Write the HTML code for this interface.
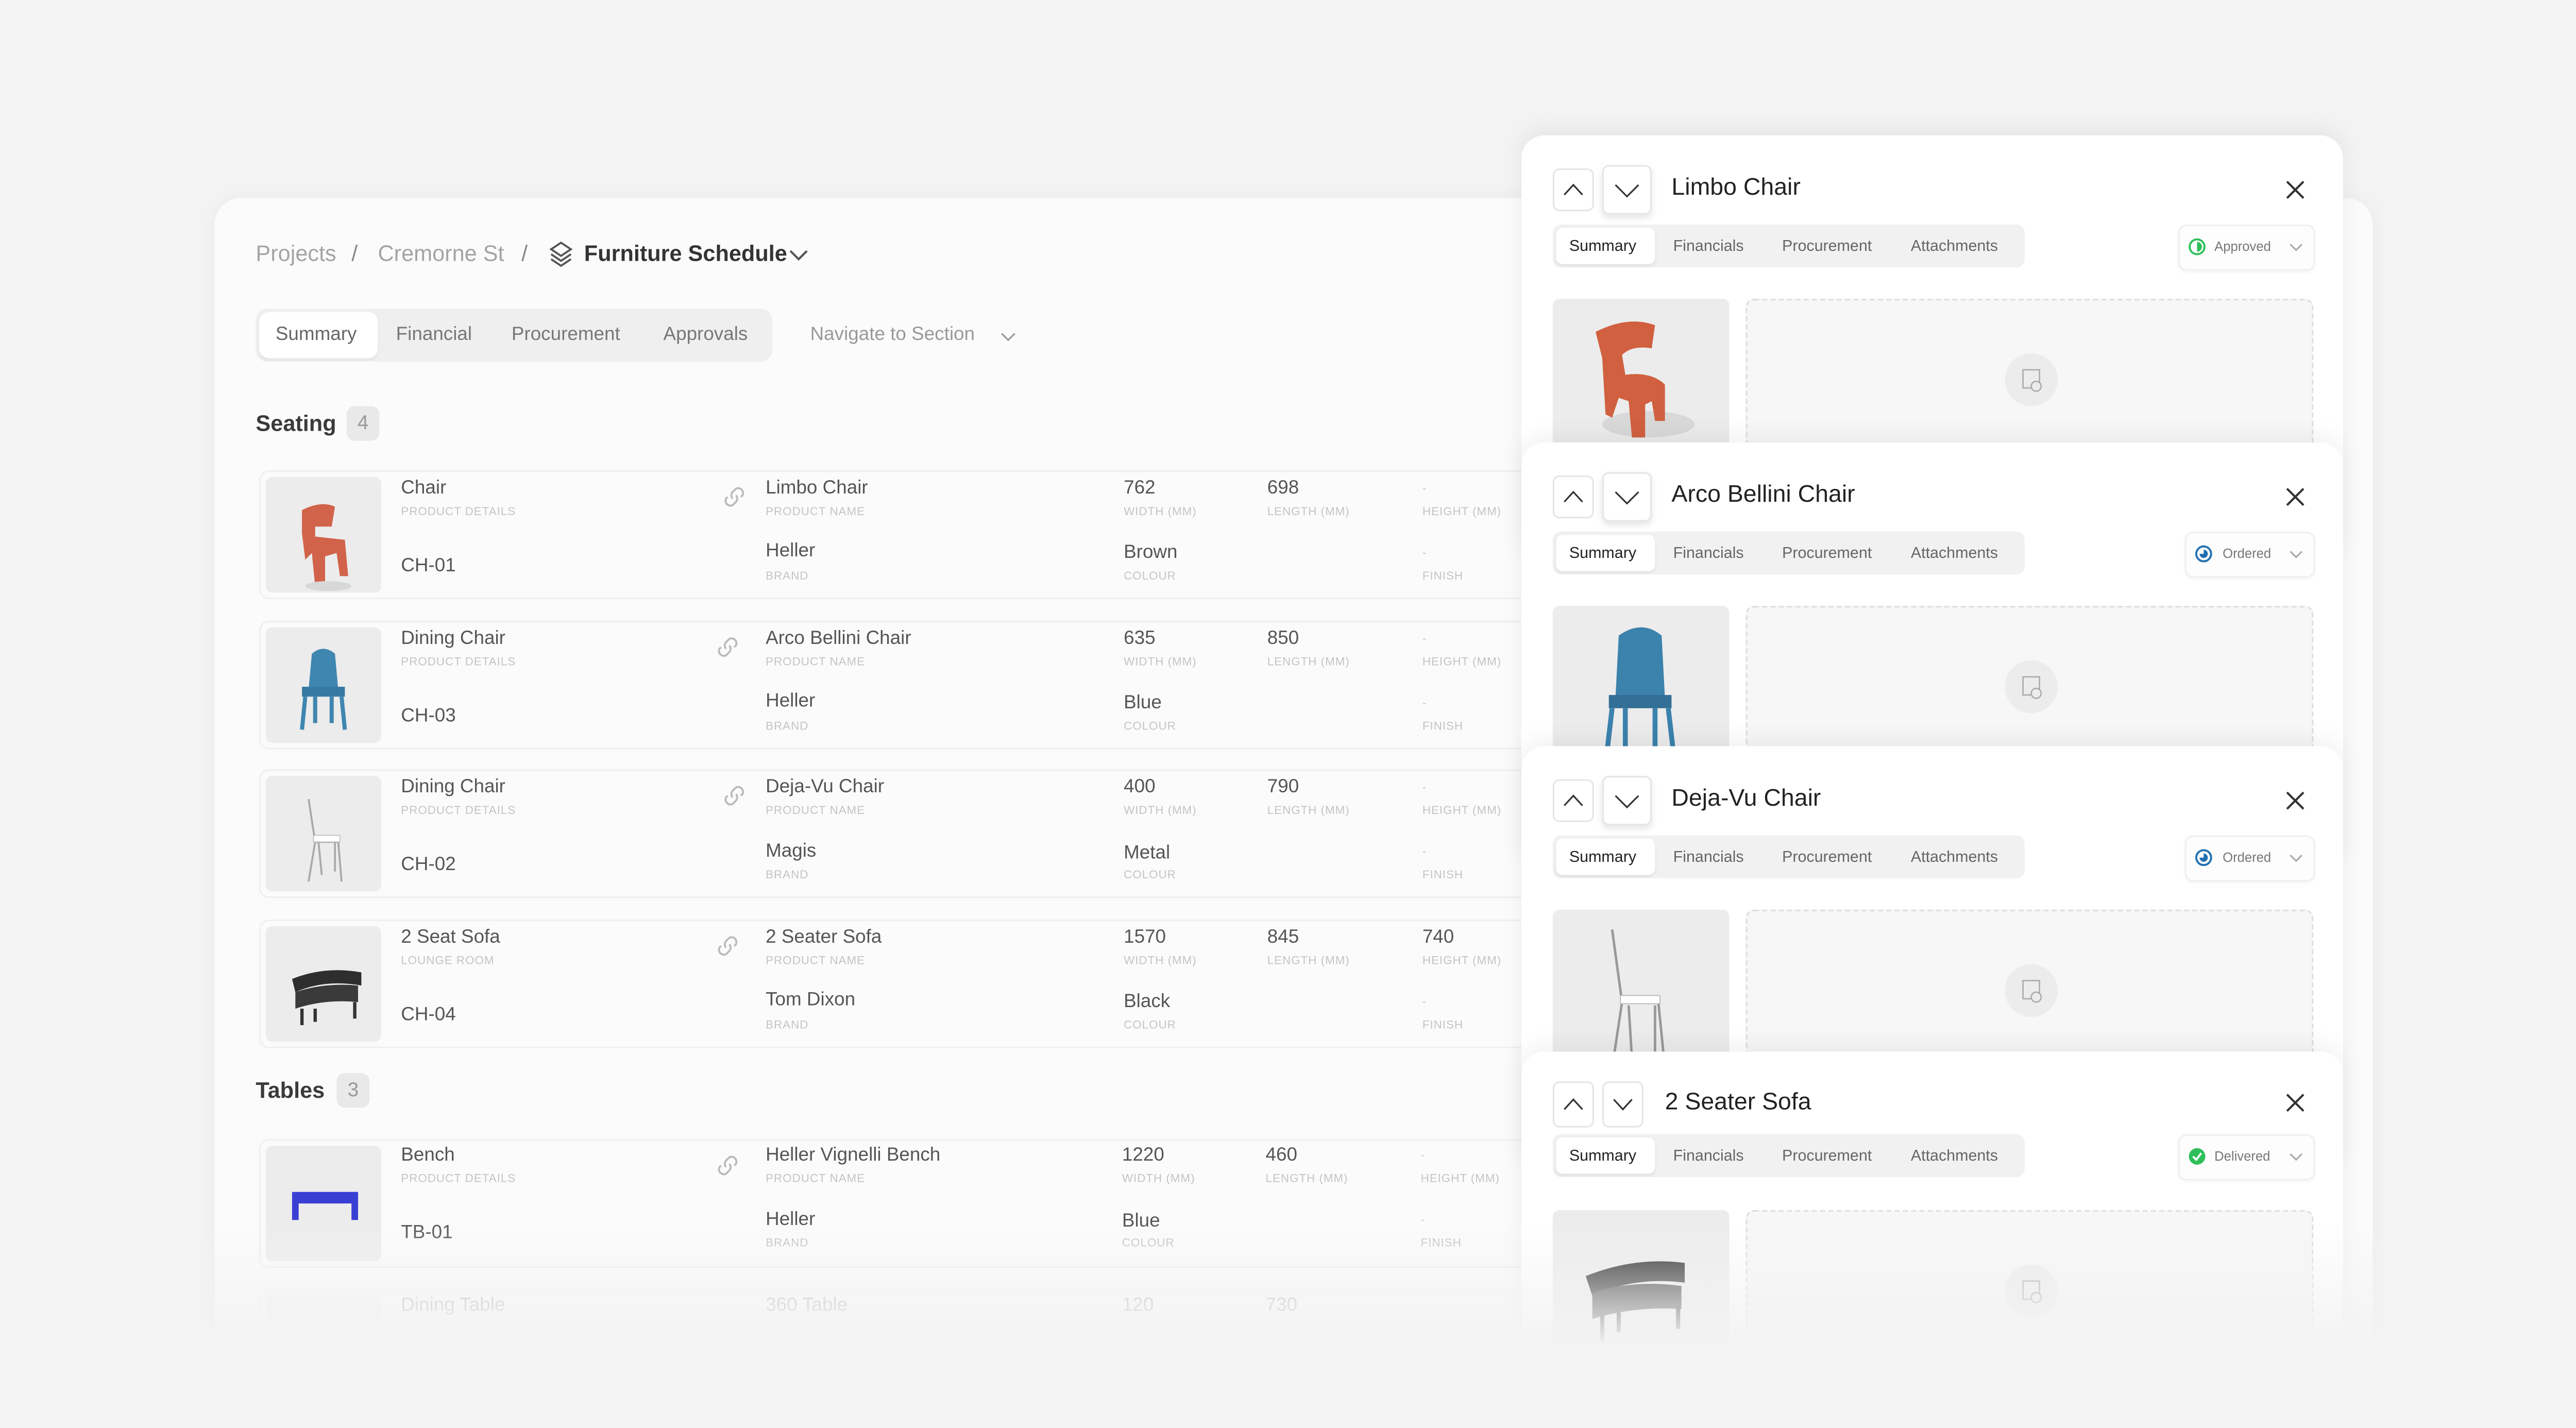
<!DOCTYPE html>
<html><head><meta charset="utf-8"><style>
html,body{margin:0;padding:0;width:5022px;height:2772px;overflow:hidden;background:#f2f2f2;}
#c{position:absolute;left:0;top:0;width:1568px;height:865px;transform:scale(3.2028,3.2046);transform-origin:0 0;font-family:"Liberation Sans",sans-serif;background:#f3f3f3;}
.a{position:absolute;white-space:nowrap;}
.main{position:absolute;left:130px;top:120px;width:1308px;height:700px;background:#fbfbfb;border-radius:16px;box-shadow:0 0 12px rgba(0,0,0,.04);}
.crumb{font-size:13.5px;color:#a4a4a4;}
.tabs{background:#efefef;border-radius:7px;}
.tab{font-size:11.5px;color:#777;}
.sec{font-size:13.5px;font-weight:bold;color:#3a3a3a;}
.badge{background:#e9e9e9;border-radius:5px;color:#999;font-size:12px;text-align:center;}
.row{position:absolute;left:157px;width:780px;height:76px;border:1px solid #f0f0f0;border-radius:6px;background:#fbfbfb;}
.img{position:absolute;left:3px;top:3px;width:70px;height:70px;background:#ececec;border-radius:4px;overflow:hidden;}
.t{font-size:11.5px;color:#555;}
.l{font-size:7px;color:#c4c4c4;letter-spacing:.3px;}
.panel{position:absolute;left:922px;width:498px;background:#fff;border-radius:14px;box-shadow:0 -4px 14px rgba(0,0,0,.06);overflow:hidden;}
.btn{position:absolute;border:1px solid #e6e6e6;border-radius:4px;background:#fff;}
.ptitle{font-size:14.5px;color:#222;}
.ptabs{position:absolute;left:19px;top:54px;width:286px;height:26px;background:#f1f1f1;border-radius:5px;}
.ptab{position:absolute;top:8px;font-size:9.5px;color:#666;}
.status{position:absolute;left:398px;top:54px;width:81px;height:26px;border:1px solid #f0f0f0;border-radius:5px;background:#fdfdfd;box-shadow:0 1px 2px rgba(0,0,0,.04);}
.pimg{position:absolute;left:19px;top:99px;width:107px;height:120px;background:#ececec;border-radius:4px;overflow:hidden;}
.drop{position:absolute;left:136px;top:99px;width:342px;height:120px;border:1px dashed #dedede;border-radius:5px;background:#f7f7f7;}
.ph{position:absolute;left:156px;top:32px;width:32px;height:32px;border-radius:50%;background:#ececec;}
.fade{position:absolute;left:0;top:740px;width:1568px;height:125px;background:linear-gradient(to bottom,rgba(243,243,243,0),#f3f3f3 60%);}
</style></head><body><div id="c">
<div class="main"></div>
<div class="a crumb" style="left:155px;top:146px">Projects</div>
<div class="a crumb" style="left:213px;top:146px;color:#888">/</div>
<div class="a crumb" style="left:229px;top:146px">Cremorne St</div>
<div class="a crumb" style="left:316px;top:146px;color:#888">/</div>
<svg class="a" style="left:332px;top:146px" width="16" height="17" viewBox="0 0 16 17" fill="none" stroke="#555" stroke-width="1.2"><path d="M8 1 L14 5 L8 9 L2 5Z"/><path d="M2 8 L8 12 L14 8"/><path d="M2 11 L8 15 L14 11"/></svg>
<div class="a" style="left:354px;top:146px;font-size:13.5px;font-weight:bold;color:#333">Furniture Schedule</div>
<svg class="a" style="left:478px;top:151px" width="12" height="8"><path d="M1 1 L6 6 L11 1" stroke="#555" fill="none" stroke-width="1.3"/></svg>

<div class="a tabs" style="left:155px;top:187px;width:313px;height:32px"></div>
<div class="a" style="left:157px;top:189px;width:72px;height:28px;background:#fff;border-radius:6px;box-shadow:0 1px 2px rgba(0,0,0,.06)"></div>
<div class="a tab" style="left:167px;top:197px;color:#666">Summary</div>
<div class="a tab" style="left:240px;top:197px">Financial</div>
<div class="a tab" style="left:310px;top:197px">Procurement</div>
<div class="a tab" style="left:402px;top:197px">Approvals</div>
<div class="a tab" style="left:491px;top:197px;color:#999">Navigate to Section</div>
<svg class="a" style="left:606px;top:201px" width="10" height="7"><path d="M1 1 L5 5 L9 1" stroke="#999" fill="none"/></svg>

<div class="a sec" style="left:155px;top:249px">Seating</div>
<div class="a badge" style="left:210px;top:246px;width:20px;height:21px;line-height:21px">4</div>
<div class="a sec" style="left:155px;top:653px">Tables</div>
<div class="a badge" style="left:204px;top:650px;width:20px;height:21px;line-height:21px">3</div>

<div class="row" style="top:285px"><div class="img"><svg width="70" height="70"><path d="M22 20 Q34 14 42 18 L40 30 L30 30 L30 36 L48 38 L50 60 L45 60 L43 46 L36 48 L36 66 L30 66 L28 46 L24 50 L22 34 Z" fill="#d1634a"/><ellipse cx="38" cy="66" rx="14" ry="3" fill="#d8d8d8"/></svg></div></div>
<div class="row" style="top:376px"><div class="img"><svg width="70" height="70"><path d="M28 16 Q35 10 42 16 L44 38 L26 38Z" fill="#3f86b0"/><rect x="22" y="36" width="26" height="6" fill="#357aa3"/><path d="M24 42 L22 62 M46 42 L48 62 M30 42 L30 58 M40 42 L40 58" stroke="#3f86b0" stroke-width="2.5"/></svg></div></div>
<div class="row" style="top:466px"><div class="img"><svg width="70" height="70"><path d="M26 14 L30 40 L26 64 M30 40 L44 40 L46 64 M32 40 L34 60 M42 40 L42 58" stroke="#aaa" stroke-width="1.2" fill="none"/><rect x="29" y="36" width="16" height="4" fill="#fff" stroke="#bbb" stroke-width=".5"/></svg></div></div>
<div class="row" style="top:557px"><div class="img"><svg width="70" height="70"><path d="M16 32 Q36 24 58 28 L58 36 Q36 32 18 40Z" fill="#2e2e2e"/><path d="M18 40 Q36 34 56 36 L56 46 Q36 44 18 50Z" fill="#3a3a3a"/><path d="M22 50 L22 60 M54 46 L54 56 M30 50 L30 58" stroke="#333" stroke-width="2"/></svg></div></div>
<div class="row" style="top:690px"><div class="img"><svg width="70" height="70"><rect x="16" y="28" width="40" height="7" fill="#3a3fd4"/><rect x="16" y="33" width="4" height="12" fill="#3a3fd4"/><rect x="52" y="33" width="4" height="12" fill="#3a3fd4"/></svg></div></div>
<div class="row" style="top:781px;opacity:.5"><div class="img"></div></div>

<div class="a t" style="left:243px;top:290px">Chair</div><div class="a l" style="left:243px;top:307px">PRODUCT DETAILS</div><div class="a t" style="left:243px;top:337px">CH-01</div>
<div class="a t" style="left:464px;top:290px">Limbo Chair</div><div class="a l" style="left:464px;top:307px">PRODUCT NAME</div><div class="a t" style="left:464px;top:328px">Heller</div><div class="a l" style="left:464px;top:346px">BRAND</div>
<div class="a t" style="left:681px;top:290px">762</div><div class="a l" style="left:681px;top:307px">WIDTH (MM)</div><div class="a t" style="left:681px;top:329px">Brown</div><div class="a l" style="left:681px;top:346px">COLOUR</div>
<div class="a t" style="left:768px;top:290px">698</div><div class="a l" style="left:768px;top:307px">LENGTH (MM)</div>
<div class="a l" style="left:862px;top:293px">-</div><div class="a l" style="left:862px;top:307px">HEIGHT (MM)</div><div class="a l" style="left:862px;top:332px">-</div><div class="a l" style="left:862px;top:346px">FINISH</div>

<div class="a t" style="left:243px;top:381px">Dining Chair</div><div class="a l" style="left:243px;top:398px">PRODUCT DETAILS</div><div class="a t" style="left:243px;top:428px">CH-03</div>
<div class="a t" style="left:464px;top:381px">Arco Bellini Chair</div><div class="a l" style="left:464px;top:398px">PRODUCT NAME</div><div class="a t" style="left:464px;top:419px">Heller</div><div class="a l" style="left:464px;top:437px">BRAND</div>
<div class="a t" style="left:681px;top:381px">635</div><div class="a l" style="left:681px;top:398px">WIDTH (MM)</div><div class="a t" style="left:681px;top:420px">Blue</div><div class="a l" style="left:681px;top:437px">COLOUR</div>
<div class="a t" style="left:768px;top:381px">850</div><div class="a l" style="left:768px;top:398px">LENGTH (MM)</div>
<div class="a l" style="left:862px;top:384px">-</div><div class="a l" style="left:862px;top:398px">HEIGHT (MM)</div><div class="a l" style="left:862px;top:423px">-</div><div class="a l" style="left:862px;top:437px">FINISH</div>

<div class="a t" style="left:243px;top:471px">Dining Chair</div><div class="a l" style="left:243px;top:488px">PRODUCT DETAILS</div><div class="a t" style="left:243px;top:518px">CH-02</div>
<div class="a t" style="left:464px;top:471px">Deja-Vu Chair</div><div class="a l" style="left:464px;top:488px">PRODUCT NAME</div><div class="a t" style="left:464px;top:510px">Magis</div><div class="a l" style="left:464px;top:527px">BRAND</div>
<div class="a t" style="left:681px;top:471px">400</div><div class="a l" style="left:681px;top:488px">WIDTH (MM)</div><div class="a t" style="left:681px;top:511px">Metal</div><div class="a l" style="left:681px;top:527px">COLOUR</div>
<div class="a t" style="left:768px;top:471px">790</div><div class="a l" style="left:768px;top:488px">LENGTH (MM)</div>
<div class="a l" style="left:862px;top:474px">-</div><div class="a l" style="left:862px;top:488px">HEIGHT (MM)</div><div class="a l" style="left:862px;top:513px">-</div><div class="a l" style="left:862px;top:527px">FINISH</div>

<div class="a t" style="left:243px;top:562px">2 Seat Sofa</div><div class="a l" style="left:243px;top:579px">LOUNGE ROOM</div><div class="a t" style="left:243px;top:609px">CH-04</div>
<div class="a t" style="left:464px;top:562px">2 Seater Sofa</div><div class="a l" style="left:464px;top:579px">PRODUCT NAME</div><div class="a t" style="left:464px;top:600px">Tom Dixon</div><div class="a l" style="left:464px;top:618px">BRAND</div>
<div class="a t" style="left:681px;top:562px">1570</div><div class="a l" style="left:681px;top:579px">WIDTH (MM)</div><div class="a t" style="left:681px;top:601px">Black</div><div class="a l" style="left:681px;top:618px">COLOUR</div>
<div class="a t" style="left:768px;top:562px">845</div><div class="a l" style="left:768px;top:579px">LENGTH (MM)</div>
<div class="a t" style="left:862px;top:562px">740</div><div class="a l" style="left:862px;top:579px">HEIGHT (MM)</div><div class="a l" style="left:862px;top:604px">-</div><div class="a l" style="left:862px;top:618px">FINISH</div>

<div class="a t" style="left:243px;top:694px">Bench</div><div class="a l" style="left:243px;top:711px">PRODUCT DETAILS</div><div class="a t" style="left:243px;top:741px">TB-01</div>
<div class="a t" style="left:464px;top:694px">Heller Vignelli Bench</div><div class="a l" style="left:464px;top:711px">PRODUCT NAME</div><div class="a t" style="left:464px;top:733px">Heller</div><div class="a l" style="left:464px;top:750px">BRAND</div>
<div class="a t" style="left:680px;top:694px">1220</div><div class="a l" style="left:680px;top:711px">WIDTH (MM)</div><div class="a t" style="left:680px;top:734px">Blue</div><div class="a l" style="left:680px;top:750px">COLOUR</div>
<div class="a t" style="left:767px;top:694px">460</div><div class="a l" style="left:767px;top:711px">LENGTH (MM)</div>
<div class="a l" style="left:861px;top:697px">-</div><div class="a l" style="left:861px;top:711px">HEIGHT (MM)</div><div class="a l" style="left:861px;top:736px">-</div><div class="a l" style="left:861px;top:750px">FINISH</div>

<div class="a t" style="left:243px;top:785px;color:#bbb">Dining Table</div>
<div class="a t" style="left:464px;top:785px;color:#bbb">360 Table</div>
<div class="a t" style="left:680px;top:785px;color:#bbb">120</div>
<div class="a t" style="left:767px;top:785px;color:#bbb">730</div>

<svg class="a" style="left:437px;top:293px" width="16" height="16" viewBox="0 0 16 16" fill="none" stroke="#bbb" stroke-width="1.2"><path d="M7 9 a3 3 0 0 1 0-4 l2-2 a3 3 0 0 1 4 4 l-1 1"/><path d="M9 7 a3 3 0 0 1 0 4 l-2 2 a3 3 0 0 1-4-4 l1-1"/></svg>
<svg class="a" style="left:433px;top:384px" width="16" height="16" viewBox="0 0 16 16" fill="none" stroke="#bbb" stroke-width="1.2"><path d="M7 9 a3 3 0 0 1 0-4 l2-2 a3 3 0 0 1 4 4 l-1 1"/><path d="M9 7 a3 3 0 0 1 0 4 l-2 2 a3 3 0 0 1-4-4 l1-1"/></svg>
<svg class="a" style="left:437px;top:474px" width="16" height="16" viewBox="0 0 16 16" fill="none" stroke="#bbb" stroke-width="1.2"><path d="M7 9 a3 3 0 0 1 0-4 l2-2 a3 3 0 0 1 4 4 l-1 1"/><path d="M9 7 a3 3 0 0 1 0 4 l-2 2 a3 3 0 0 1-4-4 l1-1"/></svg>
<svg class="a" style="left:433px;top:565px" width="16" height="16" viewBox="0 0 16 16" fill="none" stroke="#bbb" stroke-width="1.2"><path d="M7 9 a3 3 0 0 1 0-4 l2-2 a3 3 0 0 1 4 4 l-1 1"/><path d="M9 7 a3 3 0 0 1 0 4 l-2 2 a3 3 0 0 1-4-4 l1-1"/></svg>
<svg class="a" style="left:433px;top:698px" width="16" height="16" viewBox="0 0 16 16" fill="none" stroke="#bbb" stroke-width="1.2"><path d="M7 9 a3 3 0 0 1 0-4 l2-2 a3 3 0 0 1 4 4 l-1 1"/><path d="M9 7 a3 3 0 0 1 0 4 l-2 2 a3 3 0 0 1-4-4 l1-1"/></svg>

<div class="panel" style="top:82px;height:260px">
 <div class="btn" style="left:19px;top:20px;width:23px;height:24px"><svg width="23" height="24"><path d="M6 15 L11.5 9 L17 15" stroke="#333" fill="none"/></svg></div>
 <div class="btn" style="left:49px;top:18px;width:28px;height:28px;box-shadow:0 2px 4px rgba(0,0,0,.1)"><svg width="28" height="28"><path d="M7 11 L14 18 L21 11" stroke="#333" fill="none"/></svg></div>
 <div class="a ptitle" style="left:91px;top:24px">Limbo Chair</div>
 <svg class="a" style="left:462px;top:26px" width="14" height="14"><path d="M2 2 L12 12 M12 2 L2 12" stroke="#333" stroke-width="1.3"/></svg>
 <div class="ptabs"><div class="a" style="left:2px;top:2px;width:60px;height:22px;background:#fff;border-radius:4px;box-shadow:0 1px 2px rgba(0,0,0,.08)"></div><div class="ptab" style="left:10px;color:#222">Summary</div><div class="ptab" style="left:73px">Financials</div><div class="ptab" style="left:139px">Procurement</div><div class="ptab" style="left:217px">Attachments</div></div>
 <div class="status"><svg class="a" style="left:5px;top:7px" width="11" height="11"><circle cx="5.5" cy="5.5" r="4.5" fill="none" stroke="#2ebf5a" stroke-width="1.2"/><path d="M5.5 2.5 A3 3 0 0 1 5.5 8.5Z" fill="#2ebf5a"/></svg><div class="a" style="left:21px;top:8px;font-size:8px;color:#777">Approved</div><svg class="a" style="left:66px;top:10px" width="9" height="6"><path d="M1 1 L4.5 4.5 L8 1" stroke="#aaa" fill="none"/></svg></div>
 <div class="pimg"><svg width="107" height="120"><ellipse cx="58" cy="76" rx="28" ry="8" fill="#d9d9d9"/><path d="M26 20 Q46 10 62 16 L60 30 Q48 28 42 34 L44 46 Q60 44 68 52 L68 74 L62 74 L60 62 L56 64 L56 84 L48 84 L46 62 L40 60 L36 72 L32 70 L30 36 Z" fill="#d0603f"/></svg></div>
 <div class="drop"><div class="ph"><svg width="32" height="32"><rect x="11" y="10" width="10" height="11" fill="none" stroke="#aaa" stroke-width=".8"/><circle cx="19" cy="20" r="3" fill="#ececec" stroke="#aaa" stroke-width=".8"/></svg></div></div>
</div>
<div class="panel" style="top:268px;height:260px">
 <div class="btn" style="left:19px;top:20px;width:23px;height:24px"><svg width="23" height="24"><path d="M6 15 L11.5 9 L17 15" stroke="#333" fill="none"/></svg></div>
 <div class="btn" style="left:49px;top:18px;width:28px;height:28px;box-shadow:0 2px 4px rgba(0,0,0,.1)"><svg width="28" height="28"><path d="M7 11 L14 18 L21 11" stroke="#333" fill="none"/></svg></div>
 <div class="a ptitle" style="left:91px;top:24px">Arco Bellini Chair</div>
 <svg class="a" style="left:462px;top:26px" width="14" height="14"><path d="M2 2 L12 12 M12 2 L2 12" stroke="#333" stroke-width="1.3"/></svg>
 <div class="ptabs"><div class="a" style="left:2px;top:2px;width:60px;height:22px;background:#fff;border-radius:4px;box-shadow:0 1px 2px rgba(0,0,0,.08)"></div><div class="ptab" style="left:10px;color:#222">Summary</div><div class="ptab" style="left:73px">Financials</div><div class="ptab" style="left:139px">Procurement</div><div class="ptab" style="left:217px">Attachments</div></div>
 <div class="status" style="left:402px;width:77px"><svg class="a" style="left:5px;top:7px" width="11" height="11"><circle cx="5.5" cy="5.5" r="4.5" fill="none" stroke="#1f6fb0" stroke-width="1.2"/><path d="M5.5 3 A2.5 2.5 0 1 1 3 5.5 L5.5 5.5Z" fill="#1f6fb0"/></svg><div class="a" style="left:22px;top:8px;font-size:8px;color:#777">Ordered</div><svg class="a" style="left:62px;top:10px" width="9" height="6"><path d="M1 1 L4.5 4.5 L8 1" stroke="#aaa" fill="none"/></svg></div>
 <div class="pimg"><svg width="107" height="120"><path d="M40 18 Q54 8 66 18 L68 56 L38 56Z" fill="#3b82ad"/><rect x="34" y="54" width="38" height="8" fill="#336f96"/><path d="M36 62 L32 96 M70 62 L74 96 M44 62 L44 86 M62 62 L62 86" stroke="#3b82ad" stroke-width="3"/></svg></div>
 <div class="drop"><div class="ph"><svg width="32" height="32"><rect x="11" y="10" width="10" height="11" fill="none" stroke="#aaa" stroke-width=".8"/><circle cx="19" cy="20" r="3" fill="#ececec" stroke="#aaa" stroke-width=".8"/></svg></div></div>
</div>
<div class="panel" style="top:452px;height:260px">
 <div class="btn" style="left:19px;top:20px;width:23px;height:24px"><svg width="23" height="24"><path d="M6 15 L11.5 9 L17 15" stroke="#333" fill="none"/></svg></div>
 <div class="btn" style="left:49px;top:18px;width:28px;height:28px;box-shadow:0 2px 4px rgba(0,0,0,.1)"><svg width="28" height="28"><path d="M7 11 L14 18 L21 11" stroke="#333" fill="none"/></svg></div>
 <div class="a ptitle" style="left:91px;top:24px">Deja-Vu Chair</div>
 <svg class="a" style="left:462px;top:26px" width="14" height="14"><path d="M2 2 L12 12 M12 2 L2 12" stroke="#333" stroke-width="1.3"/></svg>
 <div class="ptabs"><div class="a" style="left:2px;top:2px;width:60px;height:22px;background:#fff;border-radius:4px;box-shadow:0 1px 2px rgba(0,0,0,.08)"></div><div class="ptab" style="left:10px;color:#222">Summary</div><div class="ptab" style="left:73px">Financials</div><div class="ptab" style="left:139px">Procurement</div><div class="ptab" style="left:217px">Attachments</div></div>
 <div class="status" style="left:402px;width:77px"><svg class="a" style="left:5px;top:7px" width="11" height="11"><circle cx="5.5" cy="5.5" r="4.5" fill="none" stroke="#1f6fb0" stroke-width="1.2"/><path d="M5.5 3 A2.5 2.5 0 1 1 3 5.5 L5.5 5.5Z" fill="#1f6fb0"/></svg><div class="a" style="left:22px;top:8px;font-size:8px;color:#777">Ordered</div><svg class="a" style="left:62px;top:10px" width="9" height="6"><path d="M1 1 L4.5 4.5 L8 1" stroke="#aaa" fill="none"/></svg></div>
 <div class="pimg"><svg width="107" height="120"><path d="M36 12 L42 56 L36 96 M42 56 L64 56 L68 96 M46 58 L48 90 M62 58 L62 86" stroke="#999" stroke-width="1.5" fill="none"/><rect x="41" y="52" width="24" height="5" fill="#fff" stroke="#bbb" stroke-width=".6"/></svg></div>
 <div class="drop"><div class="ph"><svg width="32" height="32"><rect x="11" y="10" width="10" height="11" fill="none" stroke="#aaa" stroke-width=".8"/><circle cx="19" cy="20" r="3" fill="#ececec" stroke="#aaa" stroke-width=".8"/></svg></div></div>
</div>
<div class="panel" style="top:637px;height:200px">
 <div class="btn" style="left:19px;top:18px;width:23px;height:26px"><svg width="23" height="26"><path d="M6 16 L11.5 10 L17 16" stroke="#333" fill="none"/></svg></div>
 <div class="btn" style="left:49px;top:18px;width:23px;height:26px"><svg width="23" height="26"><path d="M6 10 L11.5 16 L17 10" stroke="#333" fill="none"/></svg></div>
 <div class="a ptitle" style="left:87px;top:23px">2 Seater Sofa</div>
 <svg class="a" style="left:462px;top:24px" width="14" height="14"><path d="M2 2 L12 12 M12 2 L2 12" stroke="#333" stroke-width="1.3"/></svg>
 <div class="ptabs" style="top:50px"><div class="a" style="left:2px;top:2px;width:60px;height:22px;background:#fff;border-radius:4px;box-shadow:0 1px 2px rgba(0,0,0,.08)"></div><div class="ptab" style="left:10px;color:#222">Summary</div><div class="ptab" style="left:73px">Financials</div><div class="ptab" style="left:139px">Procurement</div><div class="ptab" style="left:217px">Attachments</div></div>
 <div class="status" style="top:50px"><svg class="a" style="left:5px;top:7px" width="11" height="11"><circle cx="5.5" cy="5.5" r="5" fill="#2ebf5a"/><path d="M3 5.5 L5 7.5 L8 3.5" stroke="#fff" fill="none" stroke-width="1.2"/></svg><div class="a" style="left:21px;top:8px;font-size:8px;color:#777">Delivered</div><svg class="a" style="left:66px;top:10px" width="9" height="6"><path d="M1 1 L4.5 4.5 L8 1" stroke="#aaa" fill="none"/></svg></div>
 <div class="pimg" style="top:96px"><svg width="107" height="120"><path d="M20 40 Q50 28 80 32 L80 44 Q50 40 24 52Z" fill="#2a2a2a"/><path d="M24 50 Q50 42 78 46 L78 60 Q50 58 24 66Z" fill="#444"/><path d="M30 64 L30 80 M76 58 L76 72 M40 62 L40 74" stroke="#333" stroke-width="2.5"/></svg></div>
 <div class="drop" style="top:96px"><div class="ph"><svg width="32" height="32"><rect x="11" y="10" width="10" height="11" fill="none" stroke="#aaa" stroke-width=".8"/><circle cx="19" cy="20" r="3" fill="#ececec" stroke="#aaa" stroke-width=".8"/></svg></div></div>
</div>
<div class="fade"></div>
</div></body></html>
